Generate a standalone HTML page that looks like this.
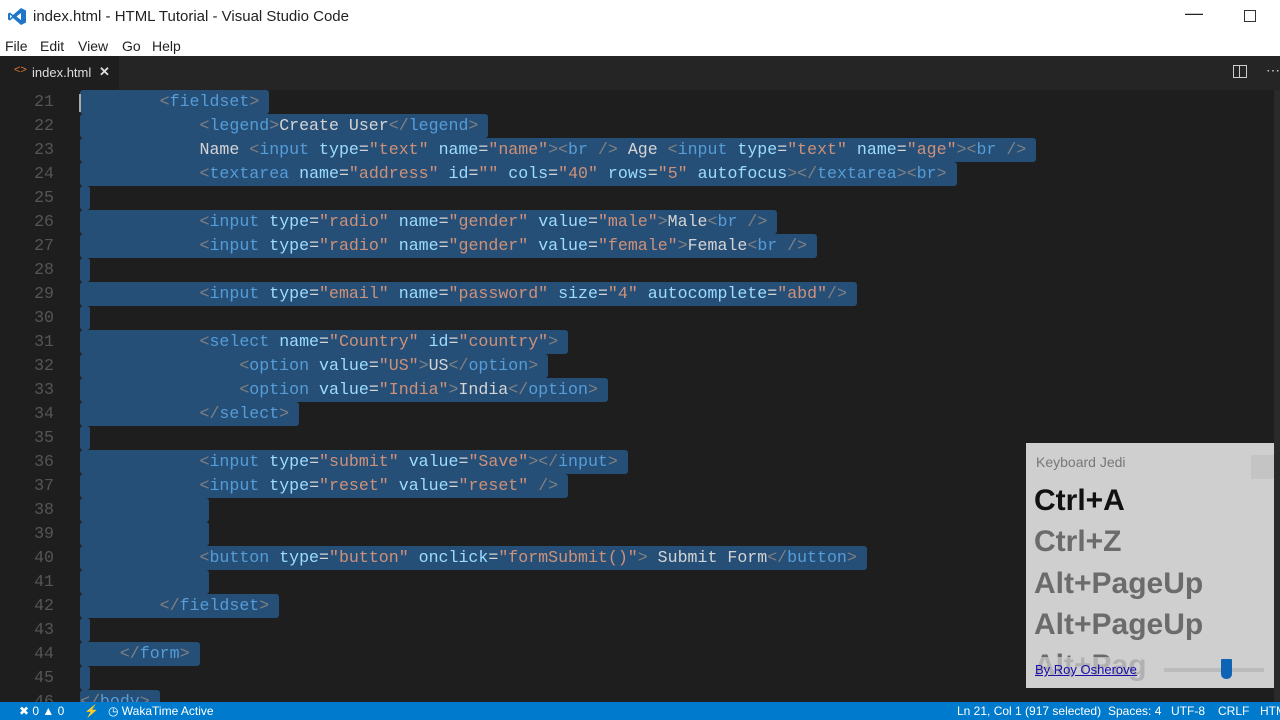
<!DOCTYPE html>
<html><head><style>
body{margin:0;width:1280px;height:720px;overflow:hidden;background:#1e1e1e;font-family:"Liberation Sans",sans-serif;position:relative}
.title{position:absolute;left:0;top:0;width:1280px;height:33px;background:#fff;font-size:15px;color:#222}
.menu{position:absolute;left:0;top:33px;width:1280px;height:23px;background:#fff;font-size:14px;color:#222}
.menu span{position:absolute;top:4px}
.tabs{position:absolute;left:0;top:56px;width:1280px;height:34px;background:#252526}
.tab{position:absolute;left:0;top:0;width:119px;height:34px;background:#1e1e1e;color:#ddd;font-size:13px}
.code{position:absolute;left:0;top:90px;width:1280px;height:612px;overflow:hidden}
.ln{position:absolute;left:0;width:54px;text-align:right;color:#555;font:16.6px/24px "Liberation Mono",monospace}
.l{position:absolute;left:80px;white-space:pre;font:16.6px/24px "Liberation Mono",monospace;color:#d4d4d4;height:24px}
.l>span.s{background:#264f78;border-radius:3px;display:inline-block;height:24px;line-height:24px;vertical-align:top}
.p{color:#808080}.t{color:#569cd6}.a{color:#9cdcfe}.v{color:#ce9178}
.status{position:absolute;left:0;top:702px;width:1280px;height:18px;background:#007acc;color:#fff;font-size:12px}
.status span{position:absolute;top:2px}
.jedi{position:absolute;left:1026px;top:443px;width:250px;height:245px;background:#cfcfcf;overflow:hidden}
.k{position:absolute;left:8px;font:bold 30px "Liberation Sans",sans-serif;color:#6b6b6b}
</style></head><body>
<div class="title">
<svg style="position:absolute;left:8px;top:8px" width="18" height="17" viewBox="0 0 18 17"><path d="M13 0 L18 2.5 V14.5 L13 17 L5 10 L2 12.5 L0 11.5 V5.5 L2 4.5 L5 7 Z M13 5 L8.5 8.5 L13 12 Z M2 6.5 V10.5 L4 8.5 Z" fill="#1f76c9" fill-rule="evenodd"/></svg>
<span style="position:absolute;left:33px;top:8px">index.html - HTML Tutorial - Visual Studio Code</span>
<span style="position:absolute;left:1185px;top:3px;font-size:18px">&#8212;</span>
<div style="position:absolute;left:1244px;top:10px;width:10px;height:10px;border:1px solid #333"></div>
</div>
<div class="menu"><span style="left:5px;top:5px">File</span><span style="left:40px;top:5px">Edit</span><span style="left:78px;top:5px">View</span><span style="left:122px;top:5px">Go</span><span style="left:152px;top:5px">Help</span></div>
<div class="tabs"><div class="tab"><span style="position:absolute;left:14px;top:8px;color:#e37933;font-size:11px">&lt;&gt;</span><span style="position:absolute;left:32px;top:9px">index.html</span><span style="position:absolute;left:99px;top:8px;font-weight:bold">&#10005;</span></div>
<span style="position:absolute;left:1233px;top:9px;width:12px;height:11px;border:1px solid #ccc"></span><span style="position:absolute;left:1239px;top:9px;width:1px;height:12px;background:#ccc"></span>
<span style="position:absolute;left:1266px;top:6px;color:#ccc;font-size:14px">&#8943;</span></div>
<div class="code">
<div style="position:absolute;left:79px;top:4px;width:2px;height:18px;background:#aaa;z-index:2"></div>
<div class="ln" style="top:0">21</div><div class="l" style="top:0"><span class="s">        <span class="p">&lt;</span><span class="t">fieldset</span><span class="p">&gt;</span> </span></div>
<div class="ln" style="top:24px">22</div><div class="l" style="top:24px"><span class="s">            <span class="p">&lt;</span><span class="t">legend</span><span class="p">&gt;</span>Create User<span class="p">&lt;/</span><span class="t">legend</span><span class="p">&gt;</span> </span></div>
<div class="ln" style="top:48px">23</div><div class="l" style="top:48px"><span class="s">            Name <span class="p">&lt;</span><span class="t">input</span> <span class="a">type</span>=<span class="v">"text"</span> <span class="a">name</span>=<span class="v">"name"</span><span class="p">&gt;&lt;</span><span class="t">br</span> <span class="p">/&gt;</span> Age <span class="p">&lt;</span><span class="t">input</span> <span class="a">type</span>=<span class="v">"text"</span> <span class="a">name</span>=<span class="v">"age"</span><span class="p">&gt;&lt;</span><span class="t">br</span> <span class="p">/&gt;</span> </span></div>
<div class="ln" style="top:72px">24</div><div class="l" style="top:72px"><span class="s">            <span class="p">&lt;</span><span class="t">textarea</span> <span class="a">name</span>=<span class="v">"address"</span> <span class="a">id</span>=<span class="v">""</span> <span class="a">cols</span>=<span class="v">"40"</span> <span class="a">rows</span>=<span class="v">"5"</span> <span class="a">autofocus</span><span class="p">&gt;&lt;/</span><span class="t">textarea</span><span class="p">&gt;&lt;</span><span class="t">br</span><span class="p">&gt;</span> </span></div>
<div class="ln" style="top:96px">25</div><div class="l" style="top:96px"><span class="s"> </span></div>
<div class="ln" style="top:120px">26</div><div class="l" style="top:120px"><span class="s">            <span class="p">&lt;</span><span class="t">input</span> <span class="a">type</span>=<span class="v">"radio"</span> <span class="a">name</span>=<span class="v">"gender"</span> <span class="a">value</span>=<span class="v">"male"</span><span class="p">&gt;</span>Male<span class="p">&lt;</span><span class="t">br</span> <span class="p">/&gt;</span> </span></div>
<div class="ln" style="top:144px">27</div><div class="l" style="top:144px"><span class="s">            <span class="p">&lt;</span><span class="t">input</span> <span class="a">type</span>=<span class="v">"radio"</span> <span class="a">name</span>=<span class="v">"gender"</span> <span class="a">value</span>=<span class="v">"female"</span><span class="p">&gt;</span>Female<span class="p">&lt;</span><span class="t">br</span> <span class="p">/&gt;</span> </span></div>
<div class="ln" style="top:168px">28</div><div class="l" style="top:168px"><span class="s"> </span></div>
<div class="ln" style="top:192px">29</div><div class="l" style="top:192px"><span class="s">            <span class="p">&lt;</span><span class="t">input</span> <span class="a">type</span>=<span class="v">"email"</span> <span class="a">name</span>=<span class="v">"password"</span> <span class="a">size</span>=<span class="v">"4"</span> <span class="a">autocomplete</span>=<span class="v">"abd"</span><span class="p">/&gt;</span> </span></div>
<div class="ln" style="top:216px">30</div><div class="l" style="top:216px"><span class="s"> </span></div>
<div class="ln" style="top:240px">31</div><div class="l" style="top:240px"><span class="s">            <span class="p">&lt;</span><span class="t">select</span> <span class="a">name</span>=<span class="v">"Country"</span> <span class="a">id</span>=<span class="v">"country"</span><span class="p">&gt;</span> </span></div>
<div class="ln" style="top:264px">32</div><div class="l" style="top:264px"><span class="s">                <span class="p">&lt;</span><span class="t">option</span> <span class="a">value</span>=<span class="v">"US"</span><span class="p">&gt;</span>US<span class="p">&lt;/</span><span class="t">option</span><span class="p">&gt;</span> </span></div>
<div class="ln" style="top:288px">33</div><div class="l" style="top:288px"><span class="s">                <span class="p">&lt;</span><span class="t">option</span> <span class="a">value</span>=<span class="v">"India"</span><span class="p">&gt;</span>India<span class="p">&lt;/</span><span class="t">option</span><span class="p">&gt;</span> </span></div>
<div class="ln" style="top:312px">34</div><div class="l" style="top:312px"><span class="s">            <span class="p">&lt;/</span><span class="t">select</span><span class="p">&gt;</span> </span></div>
<div class="ln" style="top:336px">35</div><div class="l" style="top:336px"><span class="s"> </span></div>
<div class="ln" style="top:360px">36</div><div class="l" style="top:360px"><span class="s">            <span class="p">&lt;</span><span class="t">input</span> <span class="a">type</span>=<span class="v">"submit"</span> <span class="a">value</span>=<span class="v">"Save"</span><span class="p">&gt;&lt;/</span><span class="t">input</span><span class="p">&gt;</span> </span></div>
<div class="ln" style="top:384px">37</div><div class="l" style="top:384px"><span class="s">            <span class="p">&lt;</span><span class="t">input</span> <span class="a">type</span>=<span class="v">"reset"</span> <span class="a">value</span>=<span class="v">"reset"</span> <span class="p">/&gt;</span> </span></div>
<div class="ln" style="top:408px">38</div><div class="l" style="top:408px"><span class="s">             </span></div>
<div class="ln" style="top:432px">39</div><div class="l" style="top:432px"><span class="s">             </span></div>
<div class="ln" style="top:456px">40</div><div class="l" style="top:456px"><span class="s">            <span class="p">&lt;</span><span class="t">button</span> <span class="a">type</span>=<span class="v">"button"</span> <span class="a">onclick</span>=<span class="v">"formSubmit()"</span><span class="p">&gt;</span> Submit Form<span class="p">&lt;/</span><span class="t">button</span><span class="p">&gt;</span> </span></div>
<div class="ln" style="top:480px">41</div><div class="l" style="top:480px"><span class="s">             </span></div>
<div class="ln" style="top:504px">42</div><div class="l" style="top:504px"><span class="s">        <span class="p">&lt;/</span><span class="t">fieldset</span><span class="p">&gt;</span> </span></div>
<div class="ln" style="top:528px">43</div><div class="l" style="top:528px"><span class="s"> </span></div>
<div class="ln" style="top:552px">44</div><div class="l" style="top:552px"><span class="s">    <span class="p">&lt;/</span><span class="t">form</span><span class="p">&gt;</span> </span></div>
<div class="ln" style="top:576px">45</div><div class="l" style="top:576px"><span class="s"> </span></div>
<div class="ln" style="top:600px">46</div><div class="l" style="top:600px"><span class="s"><span class="p">&lt;/</span><span class="t">body</span><span class="p">&gt;</span> </span></div>
</div>
<div class="jedi">
<span style="position:absolute;left:10px;top:11px;font-size:14px;color:#777">Keyboard Jedi</span>
<div style="position:absolute;left:225px;top:12px;width:25px;height:24px;background:#c4c4c4"></div>
<div class="k" style="top:41px;color:#111">Ctrl+A</div>
<div class="k" style="top:82px">Ctrl+Z</div>
<div class="k" style="top:124px">Alt+PageUp</div>
<div class="k" style="top:165px">Alt+PageUp</div>
<div class="k" style="top:206px">Alt+Pag</div>
<div style="position:absolute;left:0;top:214px;width:250px;height:31px;background:#cfcfcf;opacity:0.7"></div>
<a style="position:absolute;left:9px;top:219px;font-size:13px;color:#1a0dab;text-decoration:underline">By Roy Osherove</a>
<div style="position:absolute;left:138px;top:225px;width:100px;height:4px;background:#bbb"></div>
<div style="position:absolute;left:195px;top:216px;width:11px;height:20px;background:#0e63b5;border-radius:1px 1px 5px 5px"></div>
</div>
<div style="position:absolute;left:1274px;top:90px;width:6px;height:612px;background:#2a2a2a"></div>
<div class="status">
<span style="left:19px">&#10006; 0 &#9650; 0</span><span style="left:84px">&#9889;</span><span style="left:108px">&#9719; WakaTime Active</span>
<span style="left:957px">Ln 21, Col 1 (917 selected)</span><span style="left:1108px">Spaces: 4</span><span style="left:1171px">UTF-8</span><span style="left:1218px">CRLF</span><span style="left:1260px">HTML</span>
</div>
</body></html>
